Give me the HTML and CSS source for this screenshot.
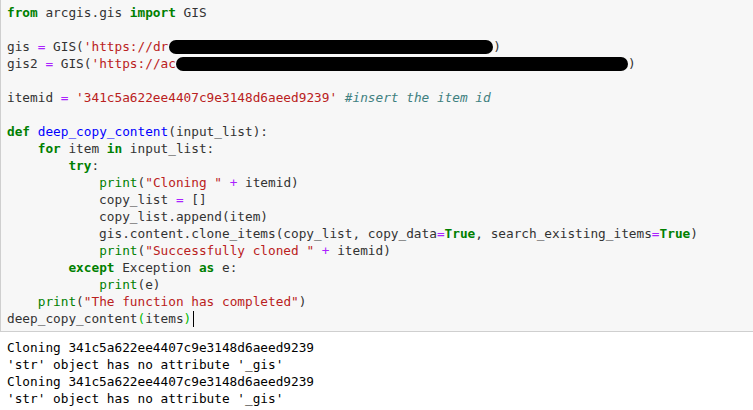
FILE: index.html
```html
<!DOCTYPE html>
<html>
<head>
<meta charset="utf-8">
<link rel="stylesheet" href="styles.css">
</head>
<body>
<div class="cell">
<pre class="code"><span class="kw">from</span> arcgis.gis <span class="kw">import</span> GIS

gis <span class="op">=</span> GIS(<span class="str">'https://dr</span><span class="redact r1"></span>)
gis2 <span class="op">=</span> GIS(<span class="str">'https://ac</span><span class="redact r2"></span>)

itemid <span class="op">=</span> <span class="str">'341c5a622ee4407c9e3148d6aeed9239'</span> <span class="cm">#insert the item id</span>

<span class="kw">def</span> <span class="def">deep_copy_content</span>(input_list):
    <span class="kw">for</span> item <span class="kw">in</span> input_list:
        <span class="kw">try</span>:
            <span class="bi">print</span>(<span class="str">"Cloning "</span> <span class="op">+</span> itemid)
            copy_list <span class="op">=</span> []
            copy_list.append(item)
            gis.content.clone_items(copy_list, copy_data<span class="op">=</span><span class="kw">True</span>, search_existing_items<span class="op">=</span><span class="kw">True</span>)
            <span class="bi">print</span>(<span class="str">"Successfully cloned "</span> <span class="op">+</span> itemid)
        <span class="kw">except</span> Exception <span class="kw">as</span> e:
            <span class="bi">print</span>(e)
    <span class="bi">print</span>(<span class="str">"The function has completed"</span>)
deep_copy_content<span class="mb">(</span>items<span class="mb">)</span><span class="cursor"></span></pre>
</div>
<pre class="output">Cloning 341c5a622ee4407c9e3148d6aeed9239
'str' object has no attribute '_gis'
Cloning 341c5a622ee4407c9e3148d6aeed9239
'str' object has no attribute '_gis'</pre>
</body>
</html>
```
FILE: styles.css
```css
html, body {
  margin: 0;
  padding: 0;
  background: #ffffff;
}
.cell {
  background: #f7f7f7;
  border-left: 1px solid #cfcfcf;
  border-bottom: 1px solid #cfcfcf;
  padding: 4px 0 4px 6px;
}
.code, .output {
  margin: 0;
  font-family: "DejaVu Sans Mono", "Liberation Mono", monospace;
  font-size: 12.75px;
  line-height: 17px;
  color: #333333;
  white-space: pre;
}
.output {
  color: #000000;
  padding: 7px 0 0 7px;
}
.kw { color: #008000; font-weight: bold; }
.bi { color: #008000; }
.str { color: #ba2121; }
.op { color: #aa22ff; }
.def { color: #0000ff; }
.cm { color: #408080; font-style: italic; }
.mb { color: #00bb00; }
.redact {
  display: inline-block;
  height: 14px;
  background: #000000;
  border-radius: 7px;
  vertical-align: -3px;
}
.r1 { width: 324px; margin-left: 1px; }
.r2 { width: 452px; margin-left: 0; }
.cursor {
  display: inline-block;
  width: 1px;
  height: 16px;
  background: #000000;
  vertical-align: -4px;
  margin-left: 2px;
}
```
